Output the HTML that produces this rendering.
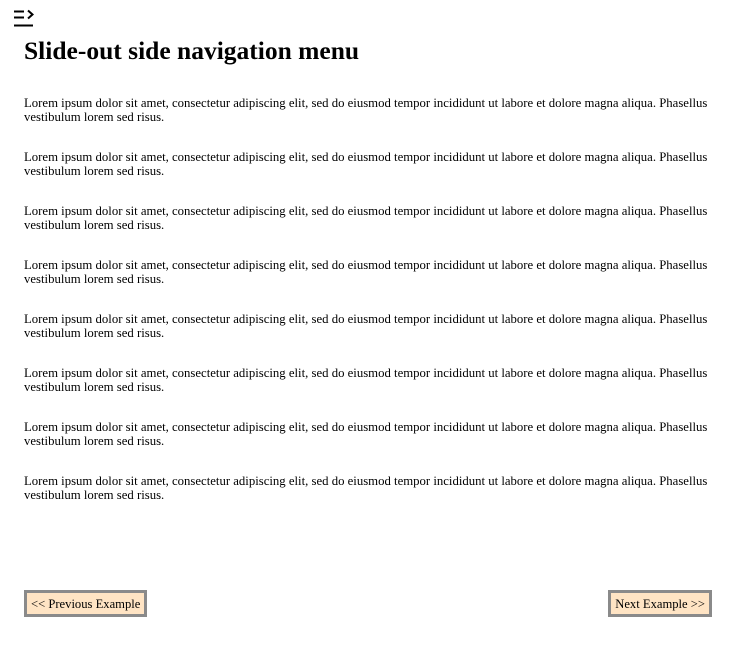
<!DOCTYPE html>
<html><head><style>
body{margin:0;font-family:"Liberation Serif",serif;color:#000;background:#fff;width:730px;height:657px;position:relative;overflow:hidden}
h1{position:absolute;left:24px;top:35px;margin:0;font-size:25.5px;line-height:32px;font-weight:bold}
.c{position:absolute;left:24px;top:96px;width:695px}
p{margin:0 0 26px;font-size:12.75px;line-height:14px}
.b{position:absolute;top:590px;height:21px;border:3px solid #8a8a8a;background:#ffe4c4;font-size:12.6px;line-height:22px;padding:0 4px}
</style></head><body>
<svg style="position:absolute;left:0;top:0" width="40" height="30"><g stroke="#000" stroke-width="2" fill="none"><path d="M14 11.5H24M14 17.5H24M14 25.5H33M28 10.5L32.5 14.5L28 18.5"/></g></svg>
<h1>Slide-out side navigation menu</h1>
<div class="c">
<p>Lorem ipsum dolor sit amet, consectetur adipiscing elit, sed do eiusmod tempor incididunt ut labore et dolore magna aliqua. Phasellus vestibulum lorem sed risus.</p>
<p>Lorem ipsum dolor sit amet, consectetur adipiscing elit, sed do eiusmod tempor incididunt ut labore et dolore magna aliqua. Phasellus vestibulum lorem sed risus.</p>
<p>Lorem ipsum dolor sit amet, consectetur adipiscing elit, sed do eiusmod tempor incididunt ut labore et dolore magna aliqua. Phasellus vestibulum lorem sed risus.</p>
<p>Lorem ipsum dolor sit amet, consectetur adipiscing elit, sed do eiusmod tempor incididunt ut labore et dolore magna aliqua. Phasellus vestibulum lorem sed risus.</p>
<p>Lorem ipsum dolor sit amet, consectetur adipiscing elit, sed do eiusmod tempor incididunt ut labore et dolore magna aliqua. Phasellus vestibulum lorem sed risus.</p>
<p>Lorem ipsum dolor sit amet, consectetur adipiscing elit, sed do eiusmod tempor incididunt ut labore et dolore magna aliqua. Phasellus vestibulum lorem sed risus.</p>
<p>Lorem ipsum dolor sit amet, consectetur adipiscing elit, sed do eiusmod tempor incididunt ut labore et dolore magna aliqua. Phasellus vestibulum lorem sed risus.</p>
<p>Lorem ipsum dolor sit amet, consectetur adipiscing elit, sed do eiusmod tempor incididunt ut labore et dolore magna aliqua. Phasellus vestibulum lorem sed risus.</p>
</div>
<div class="b" style="left:24px">&lt;&lt; Previous Example</div>
<div class="b" style="right:18px">Next Example &gt;&gt;</div>
</body></html>
